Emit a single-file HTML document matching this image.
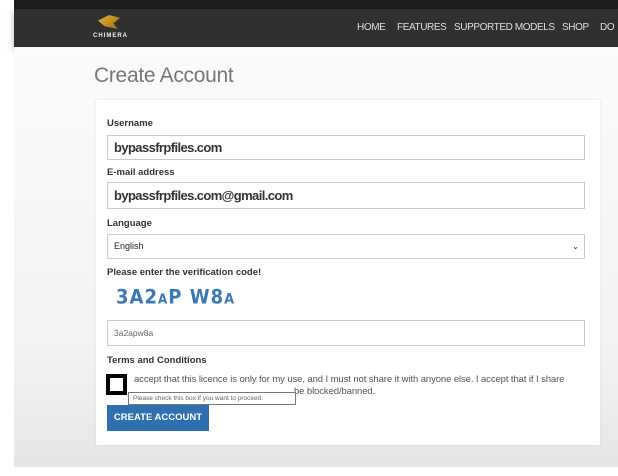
<!DOCTYPE html>
<html><head><style>
body{margin:0;width:618px;height:476px;overflow:hidden;background:#fff;font-family:"Liberation Sans",sans-serif;position:relative}
.top{position:absolute;left:14px;top:0;width:604px;height:9px;background:#1c1c1c}
.nav{position:absolute;left:14px;top:9px;width:604px;height:38px;background:#303030;box-shadow:0 3px 6px rgba(0,0,0,.3)}
.nav a{position:absolute;top:13px;color:#ddd;font-size:10px;letter-spacing:-.4px;white-space:nowrap}
.page{position:absolute;left:14px;top:47px;width:604px;height:420px;background:linear-gradient(#fbfbfb,#f3f3f3 70%,#e6e6e6)}
h1{position:absolute;left:94px;top:64px;margin:0;font-weight:normal;font-size:21px;color:#777;letter-spacing:-.3px}
.panel{position:absolute;left:96px;top:100px;width:504px;height:345px;background:#fff;box-shadow:0 0 3px rgba(0,0,0,.08)}
.lab{position:absolute;left:107px;font-size:9.5px;font-weight:bold;color:#333}
.in{position:absolute;left:107px;width:478px;border:1px solid #ccc;background:#fff;box-sizing:border-box;padding-left:6px;color:#222;white-space:nowrap}
.cap{position:absolute;left:116px;top:287px;font-size:18px;font-weight:bold;color:#3b78b5;letter-spacing:1px;font-family:"DejaVu Sans",sans-serif;transform:scaleY(1.1)}
.btn{position:absolute;left:107px;top:405px;width:102px;height:26px;background:#2e6fb0;color:#fff;font-size:9.5px;font-weight:bold;text-align:center;line-height:26px}
</style></head><body>
<div class="top"></div>
<div class="nav">
<div style="position:absolute;left:84px;top:6px;width:22px;height:14px;background:linear-gradient(135deg,#e9b63a,#9a6a12);clip-path:polygon(0 40%,50% 0,100% 20%,70% 60%,90% 100%,30% 80%)"></div>
<div style="position:absolute;left:79px;top:24px;color:#eee;font-size:6px;font-weight:bold;letter-spacing:1px">CHIMERA</div>
<a style="left:343px">HOME</a><a style="left:383px">FEATURES</a><a style="left:440px">SUPPORTED MODELS</a><a style="left:548px">SHOP</a><a style="left:586px">DO</a>
</div>
<div class="page"></div>
<h1>Create Account</h1>
<div class="panel"></div>
<div class="lab" style="top:118px">Username</div>
<div class="in" style="top:135px;height:25px;line-height:23px;font-size:13px;font-weight:bold;letter-spacing:-.6px;color:#333">bypassfrpfiles.com</div>
<div class="lab" style="top:167px">E-mail address</div>
<div class="in" style="top:182px;height:27px;line-height:25px;font-size:13px;font-weight:bold;letter-spacing:-.6px;color:#333">bypassfrpfiles.com@gmail.com</div>
<div class="lab" style="top:218px">Language</div>
<div class="in" style="top:234px;height:25px;line-height:23px;font-size:9px">English<span style="position:absolute;right:5px;font-size:8px">&#8964;</span></div>
<div class="lab" style="top:267px">Please enter the verification code!</div>
<div class="cap">3A2<span style="font-size:12px">A</span>P W8<span style="font-size:13px">A</span></div>
<div class="in" style="top:320px;height:26px;line-height:24px;font-size:8.5px;color:#666">3a2apw8a</div>
<div class="lab" style="top:355px">Terms and Conditions</div>
<div style="position:absolute;left:134px;top:374px;font-size:9.5px;color:#555;line-height:12px;white-space:nowrap;letter-spacing:-.1px">accept that this licence is only for my use, and I must not share it with anyone else. I accept that if I share<br><span style="padding-left:160px">be blocked/banned.</span></div>
<div style="position:absolute;left:106px;top:374px;width:13px;height:13px;border:4px solid #000;background:#fff"></div>
<div style="position:absolute;left:128px;top:392px;width:168px;height:13px;border:1px solid #777;background:#fff;font-size:6.5px;color:#666;line-height:12px;padding-left:4px;box-sizing:border-box">Please check this box if you want to proceed.</div>
<div class="btn">CREATE ACCOUNT</div>
</body></html>
